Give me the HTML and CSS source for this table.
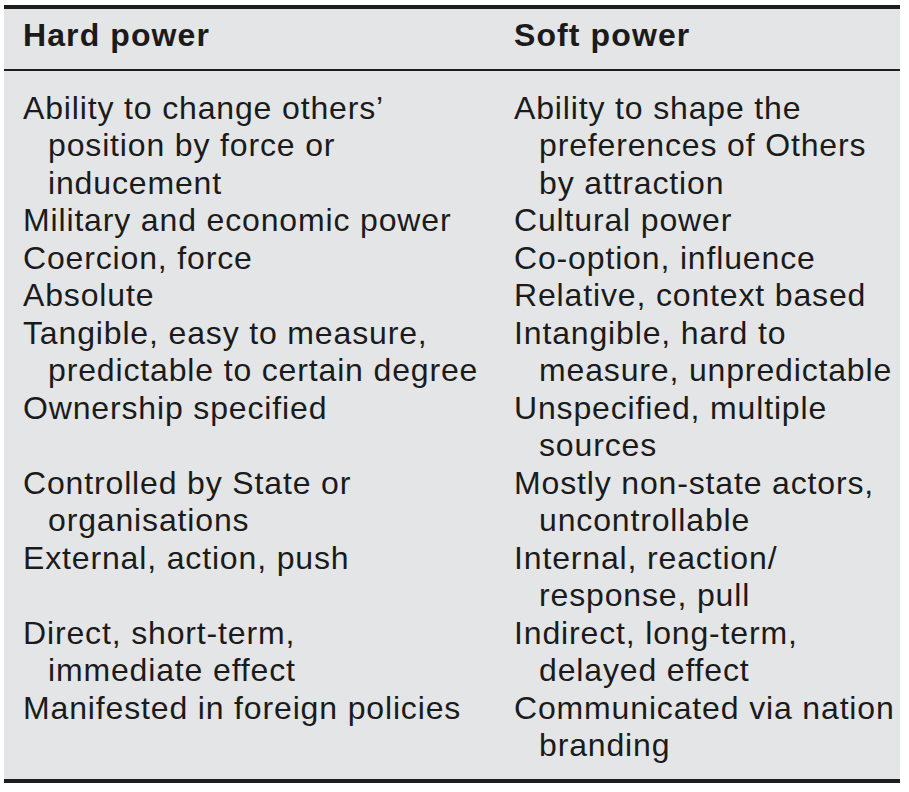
FILE: index.html
```html
<!DOCTYPE html>
<html lang="en">
<head>
<meta charset="utf-8">
<title>Hard power vs Soft power</title>
<link rel="stylesheet" href="styles.css">
</head>
<body>
<div class="table">
  <div class="head">
    <div class="th">Hard power</div>
    <div class="th">Soft power</div>
  </div>
  <div class="body">
    <div class="td">Ability to change others’<br>position by force or<br>inducement</div>
    <div class="td">Ability to shape the<br>preferences of Others<br>by attraction</div>
    <div class="td">Military and economic power</div>
    <div class="td">Cultural power</div>
    <div class="td">Coercion, force</div>
    <div class="td">Co-option, influence</div>
    <div class="td">Absolute</div>
    <div class="td">Relative, context based</div>
    <div class="td">Tangible, easy to measure,<br>predictable to certain degree</div>
    <div class="td">Intangible, hard to<br>measure, unpredictable</div>
    <div class="td">Ownership specified</div>
    <div class="td">Unspecified, multiple<br>sources</div>
    <div class="td">Controlled by State or<br>organisations</div>
    <div class="td">Mostly non-state actors,<br>uncontrollable</div>
    <div class="td">External, action, push</div>
    <div class="td">Internal, reaction/<br>response, pull</div>
    <div class="td">Direct, short-term,<br>immediate effect</div>
    <div class="td">Indirect, long-term,<br>delayed effect</div>
    <div class="td">Manifested in foreign policies</div>
    <div class="td">Communicated via nation<br>branding</div>
  </div>
</div>
</body>
</html>
```
FILE: styles.css
```css
html, body {
  margin: 0;
  padding: 0;
  background: #ffffff;
}
body {
  font-family: "Liberation Sans", Arial, Helvetica, sans-serif;
  color: #1b1b1b;
}
.table {
  margin: 5px 0 0 4px;
  width: 896px;
  background: #e4e5e7;
  border-top: 4px solid #1d1d1d;
  border-bottom: 4px solid #1d1d1d;
}
.head, .body {
  display: grid;
  grid-template-columns: 491px 1fr;
  padding-left: 19px;
}
.head {
  padding-top: 8px;
  padding-bottom: 14.5px;
  border-bottom: 2px solid #1d1d1d;
}
.th {
  font-weight: bold;
  font-size: 32px;
  line-height: 37.5px;
  letter-spacing: 1.1px;
  white-space: nowrap;
}
.body {
  padding-top: 18.5px;
  padding-bottom: 14.5px;
}
.td {
  font-size: 32px;
  line-height: 37.5px;
  letter-spacing: 0.85px;
  white-space: nowrap;
  padding-left: 25px;
  text-indent: -25px;
}
```
